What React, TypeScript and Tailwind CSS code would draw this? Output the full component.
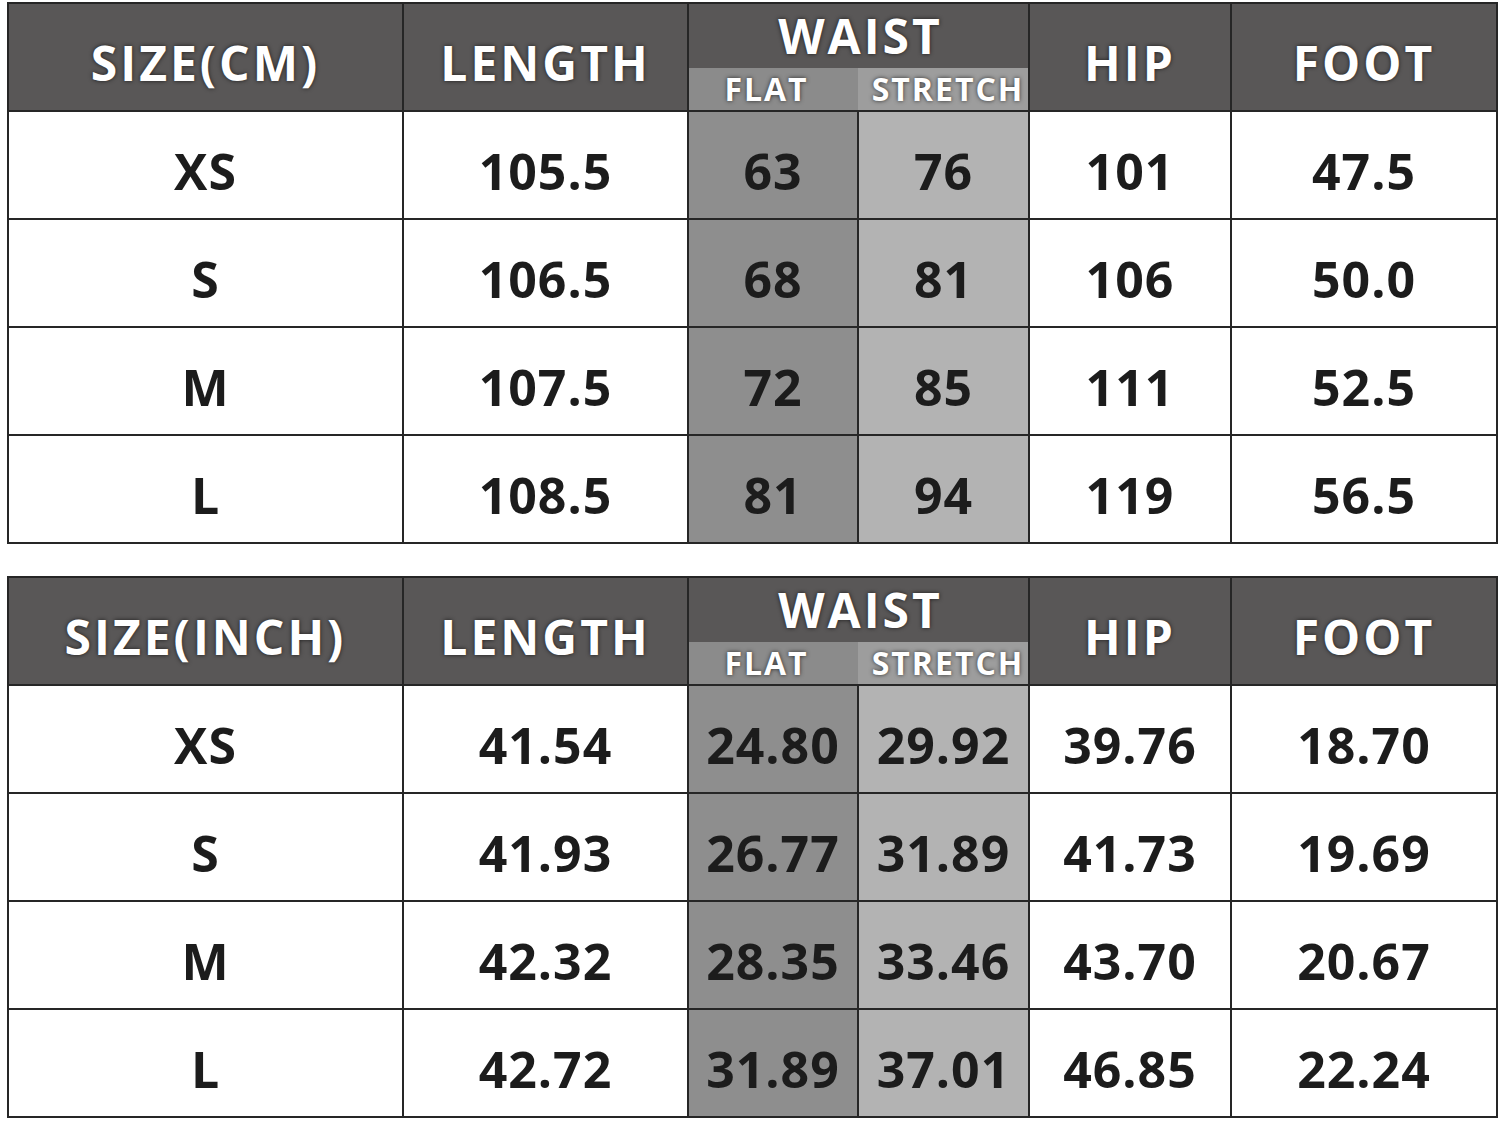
const cm = [
  ["XS", "105.5", "63", "76", "101", "47.5"],
  ["S", "106.5", "68", "81", "106", "50.0"],
  ["M", "107.5", "72", "85", "111", "52.5"],
  ["L", "108.5", "81", "94", "119", "56.5"],
];

const inch = [
  ["XS", "41.54", "24.80", "29.92", "39.76", "18.70"],
  ["S", "41.93", "26.77", "31.89", "41.73", "19.69"],
  ["M", "42.32", "28.35", "33.46", "43.70", "20.67"],
  ["L", "42.72", "31.89", "37.01", "46.85", "22.24"],
];

const head =
  "flex items-center justify-center bg-[#595757] text-white font-bold text-[48px] tracking-[3px] leading-none pt-[12px] [text-shadow:0_0_4px_rgba(0,0,0,0.7)]";

function SizeTable({ title, rows }: { title: string; rows: string[][] }) {
  return (
    <div className="grid w-[1491px] grid-cols-[393px_283px_168px_169px_200px_264px] grid-rows-[106px_106px_106px_106px_106px] gap-[2px] bg-[#262626] p-[2px]">
      <div className={head}>{title}</div>
      <div className={head}>LENGTH</div>
      <div className="col-span-2 flex flex-col bg-[#595757] text-white font-bold leading-none [text-shadow:0_0_4px_rgba(0,0,0,0.7)]">
        <div className="flex h-[64px] items-center justify-center pl-[4px] text-[48px] tracking-[3px]">WAIST</div>
        <div className="flex flex-1 text-[32px] tracking-[2px]">
          <div className="flex w-[169px] items-center justify-center bg-[#8b8b8b] pr-[14px]">FLAT</div>
          <div className="flex flex-1 items-center justify-center bg-[#9d9d9d] pl-[10px]">STRETCH</div>
        </div>
      </div>
      <div className={head}>HIP</div>
      <div className={head}>FOOT</div>
      {rows.map((r) =>
        r.map((v, i) => (
          <div
            key={r[0] + i}
            className={
              "flex items-center justify-center pt-[12px] text-[50px] font-bold leading-none tracking-[1px] text-[#1c1c1c] " +
              (i === 2 ? "bg-[#8e8e8e]" : i === 3 ? "bg-[#b3b3b3]" : "bg-white")
            }
          >
            {v}
          </div>
        ))
      )}
    </div>
  );
}

export default function App() {
  return (
    <div className="min-h-[1127px] w-[1500px] bg-white pl-[7px] pt-[2px] font-['Open_Sans',sans-serif]">
      <SizeTable title="SIZE(CM)" rows={cm} />
      <div className="h-[32px]" />
      <SizeTable title="SIZE(INCH)" rows={inch} />
    </div>
  );
}
